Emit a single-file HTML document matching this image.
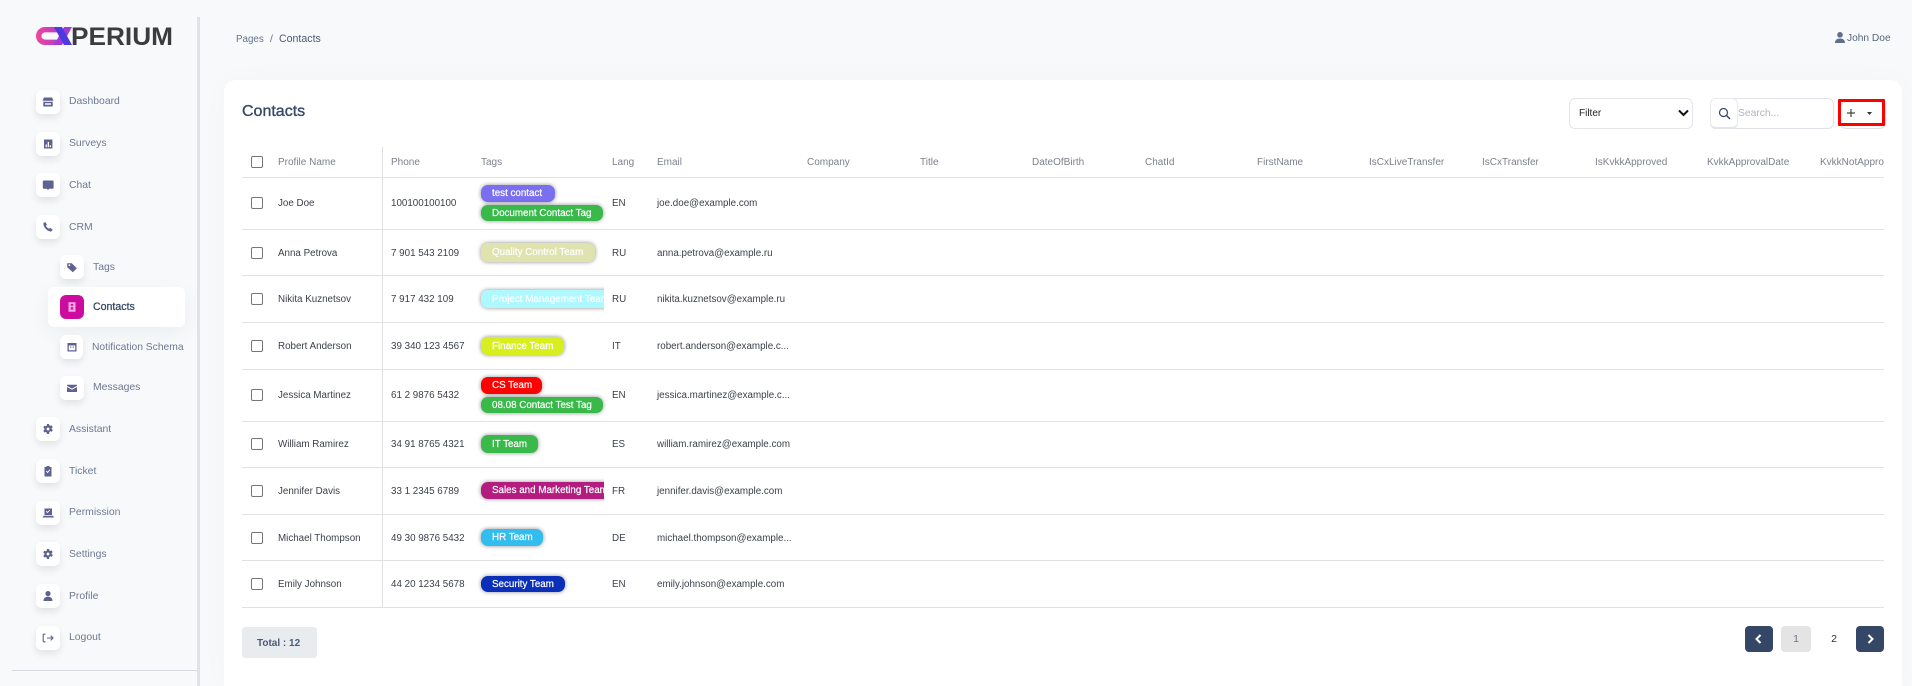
<!DOCTYPE html>
<html><head><meta charset="utf-8"><title>Contacts</title>
<style>
html,body{margin:0;padding:0;width:1912px;height:686px;overflow:hidden;background:#f8f9fa;font-family:"Liberation Sans",sans-serif}
.a{position:absolute}
.t{position:absolute;white-space:nowrap;line-height:16px;height:16px}
.s{font-size:10.4px;color:#6d7993;margin-top:1px}
.ib{position:absolute;width:24px;height:24px;background:#fff;border-radius:6px;box-shadow:0 4px 7px rgba(20,20,40,.09)}
.ib svg{position:absolute;left:6px;top:6px;width:12px;height:12px;fill:#5f6190}
.h{font-size:10px;color:#7d818c;margin-top:1px}
.c{font-size:9.8px;color:#3a3f4a;margin-top:1px}
.hl{position:absolute;left:242px;width:1642px;height:1px;background:#e2e2e2}
.cb{position:absolute;left:251px;width:10px;height:10px;border:1px solid #767676;border-radius:2px;background:#fff}
.tag{position:absolute;left:481px;border-radius:7px;box-shadow:0 0 4px rgba(0,0,0,.45);color:#fff;font-size:9.8px;line-height:17px;padding-left:11px;padding-top:1px;white-space:nowrap;box-sizing:border-box;-webkit-text-stroke:.2px #fff}
.clip{position:absolute;left:476px;top:280px;width:128px;height:240px;overflow:hidden}
.clip .tag{left:5px}
</style></head><body>

<!-- sidebar -->
<svg class="a" style="left:30px;top:20px" width="150" height="32" viewBox="30 20 150 32">
<defs><linearGradient id="g" gradientUnits="userSpaceOnUse" x1="36" x2="62" y1="0" y2="0"><stop offset="0" stop-color="#f0479b"/><stop offset="1" stop-color="#a83cd0"/></linearGradient></defs>
<path d="M58 29.700 H45 a6.300 6.300 0 0 0 0 12.600 H58" fill="none" stroke="url(#g)" stroke-width="5.400"/>
<path d="M64 27 H72 L62 45 H54 Z" fill="#a23bd4"/>
<path d="M54 27 H62 L72 45 H64 Z" fill="#4f38de"/>
<text x="71" y="45" font-family="Liberation Sans" font-weight="bold" font-size="25" fill="#3c3c3e" textLength="102" lengthAdjust="spacingAndGlyphs">PERIUM</text>
</svg>
<div class="a" style="left:197px;top:17px;width:3px;height:669px;background:#dee3e8"></div>
<div class="a" style="left:12px;top:670px;width:185px;height:1px;background:#d6dae0"></div>

<div class="ib" style="left:36px;top:90px"><svg viewBox="0 0 12 12"><path d="M2 1.500h8l1.500 3.200H.5zM1.300 5.800h9.400v4.700H1.300zM3 7.200v1.600h6V7.200z" fill-rule="evenodd"/></svg></div>
<div class="t s" style="left:69px;top:93px">Dashboard</div>
<div class="ib" style="left:36px;top:132px"><svg viewBox="0 0 12 12"><path fill-rule="evenodd" d="M2 1.500h8.400v9H2zM3.600 6.500v2.600h1.300V6.500zM5.700 4v5.100H7V4zM7.800 7.200v1.900h1.200V7.200z"/></svg></div>
<div class="t s" style="left:69px;top:135px">Surveys</div>
<div class="ib" style="left:36px;top:173px"><svg viewBox="0 0 12 12"><path d="M1.800 1.500h8.800a1 1 0 0 1 1 1v6.200a1 1 0 0 1-1 1H7l-1 1.600-1-1.600H1.800a1 1 0 0 1-1-1V2.500a1 1 0 0 1 1-1z"/></svg></div>
<div class="t s" style="left:69px;top:177px">Chat</div>
<div class="ib" style="left:36px;top:215px"><svg viewBox="0 0 12 12"><path d="M3.300 1 1.500 2c-.6 3.800 3.500 8.500 7.700 8.500l1.500-1.700-2.400-1.900-1.200.9C5.200 7 4.300 5.800 3.900 4.700l1-1z"/></svg></div>
<div class="t s" style="left:69px;top:219px">CRM</div>

<div class="ib" style="left:60px;top:255px"><svg viewBox="0 0 12 12"><path fill-rule="evenodd" d="M1.200 2.200h4.600l5 5-4 4-5.600-5zM3.400 3.300a.9.9 0 1 0 .01 0z"/></svg></div>
<div class="t s" style="left:93px;top:259px">Tags</div>

<div class="a" style="left:48px;top:287px;width:137px;height:40px;background:#fff;border-radius:6px;box-shadow:0 6px 20px rgba(20,20,40,.05)"></div>
<div class="a" style="left:60px;top:295px;width:24px;height:24px;background:#cb0c9f;border-radius:6px"></div>
<svg class="a" style="left:66px;top:301px" width="12" height="12" viewBox="0 0 12 12"><path fill="#f7a8e2" fill-rule="evenodd" d="M2.500 1.200h7v9.600h-7zM4.800 3v1.700h2.400V3zM4.800 6.300V8.500h2.400V6.300z"/></svg>
<div class="t" style="left:93px;top:299px;font-size:10.600px;color:#344767;-webkit-text-stroke:.25px #344767">Contacts</div>

<div class="ib" style="left:60px;top:335px;width:23px"><svg viewBox="0 0 12 12"><path fill-rule="evenodd" d="M1.500 2h9v8.500h-9zM2.800 4.500v4.700h6.400V4.500zM4 5.600h1.400v1H4zM6.600 5.600H8v1H6.600z"/></svg></div>
<div class="t s" style="left:92px;top:339px;font-size:10.300px">Notification Schema</div>
<div class="ib" style="left:60px;top:376px"><svg viewBox="0 0 12 12"><path d="M1 2.700h10v1.100L6 6.600 1 3.800zM1 5l5 2.800L11 5v5H1z"/></svg></div>
<div class="t s" style="left:93px;top:379px">Messages</div>

<div class="ib" style="left:36px;top:417px"><svg viewBox="0 0 12 12"><path fill-rule="evenodd" d="M5 1h2l.3 1.400 1 .5 1.400-.5 1 1.700-1.100 1 .1.900 1.100 1-1 1.700-1.400-.5-1 .6L7 11H5l-.3-1.400-1-.6-1.400.5-1-1.700 1.100-1V5.400L1.300 4.400l1-1.700 1.400.5 1-.5zM6 4.500a1.500 1.500 0 1 0 .01 0z"/></svg></div>
<div class="t s" style="left:69px;top:421px">Assistant</div>
<div class="ib" style="left:36px;top:459px"><svg viewBox="0 0 12 12"><path fill-rule="evenodd" d="M4.500 1h3v1h2v9.500h-7V2h2zM3.900 6.300l1.700 1.900L8.300 5l-.7-.6-2 2.300-1-1z"/></svg></div>
<div class="t s" style="left:69px;top:463px">Ticket</div>
<div class="ib" style="left:36px;top:501px"><svg viewBox="0 0 12 12"><path fill-rule="evenodd" d="M2.500 1.500h7.500v6.500H2.500zM3.900 4.500l1.500 1.600 2.700-2.700-.6-.5-2.100 2-.9-1zM1.500 8.700h9.500l1 1.800H.5z"/></svg></div>
<div class="t s" style="left:69px;top:504px">Permission</div>
<div class="ib" style="left:36px;top:542px"><svg viewBox="0 0 12 12"><path fill-rule="evenodd" d="M5 1h2l.3 1.400 1 .5 1.400-.5 1 1.700-1.100 1 .1.900 1.100 1-1 1.700-1.400-.5-1 .6L7 11H5l-.3-1.400-1-.6-1.400.5-1-1.700 1.100-1V5.400L1.300 4.400l1-1.700 1.400.5 1-.5zM6 4.500a1.500 1.500 0 1 0 .01 0z"/></svg></div>
<div class="t s" style="left:69px;top:546px">Settings</div>
<div class="ib" style="left:36px;top:584px"><svg viewBox="0 0 12 12"><path d="M6 1a2.600 2.600 0 1 1-.01 0zM1.500 11c0-3 1.800-4.300 4.500-4.300s4.500 1.300 4.500 4.300z"/></svg></div>
<div class="t s" style="left:69px;top:588px">Profile</div>
<div class="ib" style="left:36px;top:626px"><svg viewBox="0 0 12 12" style="fill:none;stroke:#5f6190;stroke-width:1.100"><path d="M3.500 2.200H2c-.5 0-.8.300-.8.800v6c0 .5.300.8.800.8h1.500M5 6h6M8.700 3.700 11 6 8.700 8.300"/></svg></div>
<div class="t s" style="left:69px;top:629px">Logout</div>

<!-- top bar -->
<div class="t" style="left:236px;top:32px;font-size:9.800px;color:#67748e">Pages</div>
<div class="t" style="left:270px;top:31px;font-size:10.500px;color:#67748e">/</div>
<div class="t" style="left:279px;top:31px;font-size:10.600px;color:#4a5a75">Contacts</div>
<svg class="a" style="left:1835px;top:32px" width="10" height="11" viewBox="0 0 10 11"><path fill="#5f6f8c" d="M5 0a2.800 2.800 0 1 1-.01 0zM0 11c0-3 2-4.500 5-4.500s5 1.500 5 4.500z"/></svg>
<div class="t" style="left:1847px;top:31px;font-size:10.200px;color:#5a6478">John Doe</div>

<!-- card -->
<div class="a" style="left:224px;top:80px;width:1678px;height:606px;background:#fff;border-radius:12px 12px 0 0;box-shadow:0 0 30px rgba(0,0,0,.025)"></div>
<div class="t" style="left:242px;top:104px;font-size:16px;color:#344767;-webkit-text-stroke:.35px #344767">Contacts</div>

<div class="a" style="left:1569px;top:98px;width:122px;height:29px;border:1px solid #e2e5e9;border-radius:6px;background:#fff"></div>
<div class="t" style="left:1579px;top:106px;font-size:10px;color:#222">Filter</div>
<svg class="a" style="left:1678px;top:109px" width="11" height="8" viewBox="0 0 11 8"><path d="M1 1.500 5.500 6 10 1.500" fill="none" stroke="#111" stroke-width="2"/></svg>

<div class="a" style="left:1710px;top:98px;width:122px;height:29px;border:1px solid #dfe2e6;border-radius:6px;background:#fff"></div>
<div class="a" style="left:1710px;top:98px;width:26px;height:28px;border:1px solid #e9ebee;border-bottom:2px solid #e2e4e8;border-radius:6px;background:#fff"></div>
<svg class="a" style="left:1718px;top:107px" width="13" height="13" viewBox="0 0 13 13"><circle cx="5.500" cy="5.500" r="4" fill="none" stroke="#344767" stroke-width="1.200"/><path d="M8.500 8.500 12 12" stroke="#344767" stroke-width="1.400"/></svg>
<div class="t" style="left:1738px;top:106px;font-size:10.300px;color:#adb5bd">Search...</div>

<div class="a" style="left:1840px;top:101px;width:44px;height:26px;border:1px solid #dee2e6;border-radius:6px;background:#fff"></div>
<div class="a" style="left:1838px;top:99px;width:47px;height:27px;box-sizing:border-box;border:3px solid #f00;border-radius:1px"></div>
<svg class="a" style="left:1847px;top:109px" width="8" height="8" viewBox="0 0 8 8"><path d="M4 0v8M0 4h8" stroke="#444" stroke-width="1.200"/></svg>
<svg class="a" style="left:1867px;top:112px" width="5" height="3" viewBox="0 0 5 3"><path d="M0 0h5L2.500 3z" fill="#333"/></svg>

<!-- table header -->
<div class="a" style="left:382px;top:147px;width:1px;height:460px;background:#dfdfdf"></div>
<div class="hl" style="top:177px"></div>
<div class="hl" style="top:229px"></div>
<div class="hl" style="top:275px"></div>
<div class="hl" style="top:322px"></div>
<div class="hl" style="top:369px"></div>
<div class="hl" style="top:421px"></div>
<div class="hl" style="top:467px"></div>
<div class="hl" style="top:514px"></div>
<div class="hl" style="top:560px"></div>
<div class="hl" style="top:607px"></div>

<div class="cb" style="top:156px"></div>
<div class="t h" style="left:278px;top:154px">Profile Name</div>
<div class="t h" style="left:391px;top:154px">Phone</div>
<div class="t h" style="left:481px;top:154px">Tags</div>
<div class="t h" style="left:612px;top:154px">Lang</div>
<div class="t h" style="left:657px;top:154px">Email</div>
<div class="t h" style="left:807px;top:154px">Company</div>
<div class="t h" style="left:920px;top:154px">Title</div>
<div class="t h" style="left:1032px;top:154px">DateOfBirth</div>
<div class="t h" style="left:1145px;top:154px">ChatId</div>
<div class="t h" style="left:1257px;top:154px">FirstName</div>
<div class="t h" style="left:1369px;top:154px">IsCxLiveTransfer</div>
<div class="t h" style="left:1482px;top:154px">IsCxTransfer</div>
<div class="t h" style="left:1595px;top:154px">IsKvkkApproved</div>
<div class="t h" style="left:1707px;top:154px">KvkkApprovalDate</div>
<div class="a" style="left:1820px;top:155px;width:64px;height:16px;overflow:hidden"><div class="t h" style="left:0;top:0;margin-top:0">KvkkNotApproved</div></div>

<!-- rows -->
<div class="cb" style="top:197px"></div>
<div class="t c" style="left:278px;top:195px">Joe Doe</div>
<div class="t c" style="left:391px;top:195px">100100100100</div>
<div class="t c" style="left:612px;top:195px">EN</div>
<div class="t c" style="left:657px;top:195px">joe.doe@example.com</div>
<div class="tag" style="top:185px;width:74px;height:17px;background:#7a6ff0;line-height:15px">test contact</div>
<div class="tag" style="top:205px;width:122px;height:16px;background:#38b94a;line-height:15px">Document Contact Tag</div>

<div class="cb" style="top:247px"></div>
<div class="t c" style="left:278px;top:245px">Anna Petrova</div>
<div class="t c" style="left:391px;top:245px">7 901 543 2109</div>
<div class="t c" style="left:612px;top:245px">RU</div>
<div class="t c" style="left:657px;top:245px">anna.petrova@example.ru</div>
<div class="tag" style="top:243px;width:114px;height:19px;background:#dfe3ad;line-height:18px">Quality Control Team</div>

<div class="cb" style="top:293px"></div>
<div class="t c" style="left:278px;top:291px">Nikita Kuznetsov</div>
<div class="t c" style="left:391px;top:291px">7 917 432 109</div>
<div class="t c" style="left:612px;top:291px">RU</div>
<div class="t c" style="left:657px;top:291px">nikita.kuznetsov@example.ru</div>

<div class="cb" style="top:340px"></div>
<div class="t c" style="left:278px;top:338px">Robert Anderson</div>
<div class="t c" style="left:391px;top:338px">39 340 123 4567</div>
<div class="t c" style="left:612px;top:338px">IT</div>
<div class="t c" style="left:657px;top:338px">robert.anderson@example.c...</div>
<div class="tag" style="top:337px;width:83px;height:18px;background:#d8ef1f;line-height:17px">Finance Team</div>

<div class="cb" style="top:389px"></div>
<div class="t c" style="left:278px;top:387px">Jessica Martinez</div>
<div class="t c" style="left:391px;top:387px">61 2 9876 5432</div>
<div class="t c" style="left:612px;top:387px">EN</div>
<div class="t c" style="left:657px;top:387px">jessica.martinez@example.c...</div>
<div class="tag" style="top:377px;width:61px;height:17px;background:#f00;line-height:15px">CS Team</div>
<div class="tag" style="top:397px;width:122px;height:16px;background:#38b94a;line-height:15px">08.08 Contact Test Tag</div>

<div class="cb" style="top:438px"></div>
<div class="t c" style="left:278px;top:436px">William Ramirez</div>
<div class="t c" style="left:391px;top:436px">34 91 8765 4321</div>
<div class="t c" style="left:612px;top:436px">ES</div>
<div class="t c" style="left:657px;top:436px">william.ramirez@example.com</div>
<div class="tag" style="top:435px;width:57px;height:18px;background:#38b94a;line-height:17px">IT Team</div>

<div class="cb" style="top:485px"></div>
<div class="t c" style="left:278px;top:483px">Jennifer Davis</div>
<div class="t c" style="left:391px;top:483px">33 1 2345 6789</div>
<div class="t c" style="left:612px;top:483px">FR</div>
<div class="t c" style="left:657px;top:483px">jennifer.davis@example.com</div>

<div class="cb" style="top:532px"></div>
<div class="t c" style="left:278px;top:530px">Michael Thompson</div>
<div class="t c" style="left:391px;top:530px">49 30 9876 5432</div>
<div class="t c" style="left:612px;top:530px">DE</div>
<div class="t c" style="left:657px;top:530px">michael.thompson@example...</div>
<div class="tag" style="top:529px;width:62px;height:17px;background:#33bdee;line-height:16px">HR Team</div>

<div class="cb" style="top:578px"></div>
<div class="t c" style="left:278px;top:576px">Emily Johnson</div>
<div class="t c" style="left:391px;top:576px">44 20 1234 5678</div>
<div class="t c" style="left:612px;top:576px">EN</div>
<div class="t c" style="left:657px;top:576px">emily.johnson@example.com</div>
<div class="tag" style="top:576px;width:84px;height:16px;background:#0a2fb8;line-height:15px">Security Team</div>

<div class="clip">
<div class="tag" style="top:10px;width:150px;height:18px;background:#aef8ff;line-height:17px">Project Management Team</div>
<div class="tag" style="top:202px;width:150px;height:17px;background:#b31d80;line-height:16px">Sales and Marketing Team</div>
</div>

<!-- footer -->
<div class="a" style="left:242px;top:627px;width:75px;height:31px;background:#e9ecef;border-radius:3px"></div>
<div class="t" style="left:257px;top:636px;font-size:10px;font-weight:bold;color:#4a5a75">Total : 12</div>

<div class="a" style="left:1745px;top:626px;width:28px;height:26px;background:#344767;border-radius:4px"></div>
<svg class="a" style="left:1754px;top:634px" width="9" height="10" viewBox="0 0 9 10"><path d="M6.500 1 2.500 5l4 4" fill="none" stroke="#fff" stroke-width="2"/></svg>
<div class="a" style="left:1781px;top:626px;width:30px;height:26px;background:#e4e4e4;border-radius:4px;text-align:center;font-size:10.500px;line-height:26px;color:#67748e">1</div>
<div class="a" style="left:1819px;top:626px;width:30px;height:26px;text-align:center;font-size:10.500px;line-height:26px;color:#333">2</div>
<div class="a" style="left:1856px;top:626px;width:28px;height:26px;background:#344767;border-radius:4px"></div>
<svg class="a" style="left:1866px;top:634px" width="9" height="10" viewBox="0 0 9 10"><path d="M2.500 1l4 4-4 4" fill="none" stroke="#fff" stroke-width="2"/></svg>
</body></html>
